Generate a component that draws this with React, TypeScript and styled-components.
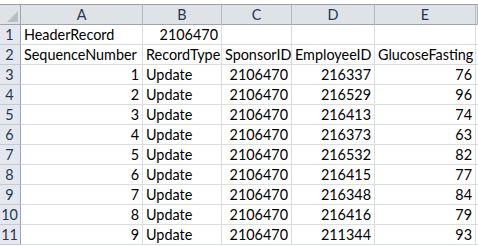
import React from 'react'
import styled, { createGlobalStyle } from 'styled-components'

const Global = createGlobalStyle`
    html, body {
        margin: 0;
        padding: 0;
        background: #ffffff;
    }
`

const Page = styled.div`
    padding-top: 4px;
    width: 478px;
    height: 246px;
    overflow: hidden;
    font-family: Lato, 'Liberation Sans', sans-serif;
    font-size: 14.4px;
    color: #000000;
    box-sizing: border-box;
`

const Sheet = styled.div`
    display: grid;
    grid-template-columns: 21px 122px 79px 70px 83px 101px 2px;
    grid-auto-rows: 20px;
    border-top: 1px solid #9c9fa5;
`

const Corner = styled.div`
    position: relative;
    background: #dfe3e8;
    border-right: 1px solid #9ea4ab;
    border-bottom: 1px solid #9ea4ab;
    &::after {
        content: '';
        position: absolute;
        right: 2px;
        bottom: 2px;
        border-style: solid;
        border-width: 0 0 11px 11px;
        border-color: transparent transparent #b9bec5 transparent;
    }
`

const ColHeader = styled.div`
    background: #dfe3e8;
    border-right: 1px solid #b4bac2;
    border-bottom: 1px solid #9ea4ab;
    color: #27374f;
    display: flex;
    align-items: center;
    justify-content: center;
`

const RowHeader = styled.div`
    background: #e4e8ee;
    border-right: 1px solid #9ea4ab;
    border-bottom: 1px solid #c5cbd2;
    color: #27374f;
    display: flex;
    align-items: center;
    justify-content: center;
    padding-right: 1px;
`

const Cell = styled.div<{ $num?: boolean }>`
    border-right: 1px solid #dadcdd;
    border-bottom: 1px solid #dadcdd;
    display: flex;
    align-items: center;
    justify-content: ${(p) => (p.$num ? 'flex-end' : 'flex-start')};
    padding: 0 3px;
    white-space: nowrap;
`

const columns = ['A', 'B', 'C', 'D', 'E']

type Value = string | number | null

const rows: Value[][] = [
    ['HeaderRecord', 2106470, null, null, null],
    ['SequenceNumber', 'RecordType', 'SponsorID', 'EmployeeID', 'GlucoseFasting'],
    [1, 'Update', 2106470, 216337, 76],
    [2, 'Update', 2106470, 216529, 96],
    [3, 'Update', 2106470, 216413, 74],
    [4, 'Update', 2106470, 216373, 63],
    [5, 'Update', 2106470, 216532, 82],
    [6, 'Update', 2106470, 216415, 77],
    [7, 'Update', 2106470, 216348, 84],
    [8, 'Update', 2106470, 216416, 79],
    [9, 'Update', 2106470, 211344, 93],
]

const App = () => (
    <Page>
        <Global />
        <Sheet>
            <Corner />
            {columns.map((c) => (
                <ColHeader key={c}>{c}</ColHeader>
            ))}
            <ColHeader />
            {rows.map((row, r) => (
                <React.Fragment key={r}>
                    <RowHeader>{r + 1}</RowHeader>
                    {row.map((v, i) => (
                        <Cell key={i} $num={typeof v === 'number'}>
                            {v}
                        </Cell>
                    ))}
                    <Cell />
                </React.Fragment>
            ))}
        </Sheet>
    </Page>
)

export default App
